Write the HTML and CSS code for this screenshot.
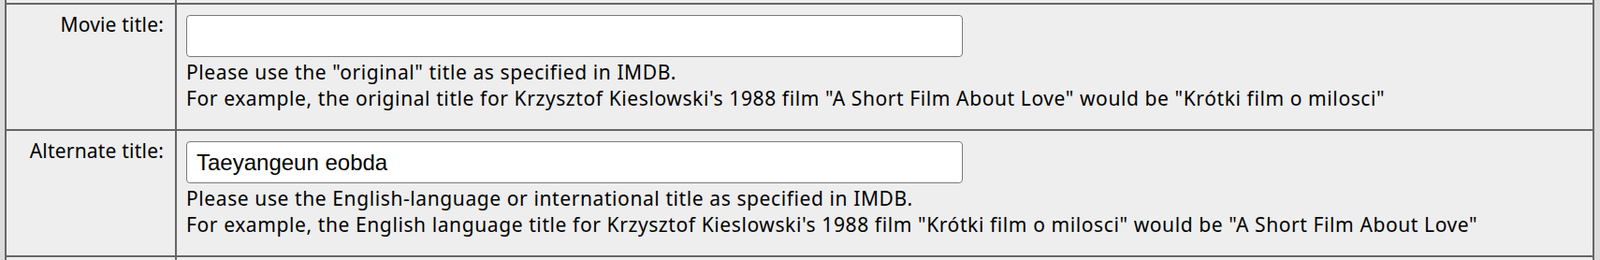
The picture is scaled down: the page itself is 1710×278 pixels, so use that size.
FILE: index.html
```html
<!DOCTYPE html>
<html lang="en">
<head>
<meta charset="utf-8">
<title>Movie titles</title>
<link rel="stylesheet" href="styles.css">
</head>
<body>
<div class="page">
  <table class="form">
    <tr class="stub"><td class="label"></td><td class="field"></td></tr>
    <tr>
      <td class="label">Movie title:</td>
      <td class="field">
        <input type="text" class="title-input" value="">
        <div class="help">Please use the "original" title as specified in IMDB.<br>For example, the original title for Krzysztof Kieslowski's 1988 film "A Short Film About Love" would be "Krótki film o milosci"</div>
      </td>
    </tr>
    <tr>
      <td class="label">Alternate title:</td>
      <td class="field">
        <input type="text" class="title-input" value="Taeyangeun eobda">
        <div class="help">Please use the English-language or international title as specified in IMDB.<br>For example, the English language title for Krzysztof Kieslowski's 1988 film "Krótki film o milosci" would be "A Short Film About Love"</div>
      </td>
    </tr>
    <tr class="stub"><td class="label"></td><td class="field"></td></tr>
  </table>
</div>
</body>
</html>
```

FILE: styles.css
```css
html, body {
  margin: 0;
  padding: 0;
  background: #dcdcdc;
}

.page {
  height: 278px;
  overflow: hidden;
  padding-left: 5px;
}

.form {
  border-collapse: separate;
  border-spacing: 0;
  border-left: 2px solid #666;
  width: 1699px;
  font-family: "Noto Sans", "DejaVu Sans", sans-serif;
  font-size: 21px;
  letter-spacing: 0.6px;
  line-height: 28px;
  color: #000;
}

.form td {
  background: #eeeeee;
  border-right: 2px solid #666;
  border-bottom: 2px solid #666;
  vertical-align: top;
}

.form .label {
  width: 168px;
  padding: 7px 12px 0 0;
  text-align: right;
  white-space: nowrap;
  letter-spacing: 0.2px;
}

.form .field {
  padding: 11px 0 19px 10px;
}

.form .stub td {
  height: 3px;
  padding: 0;
  font-size: 0;
  line-height: 0;
}

.form tr.stub:last-child td {
  height: 20px;
}

.title-input {
  display: block;
  box-sizing: border-box;
  width: 830px;
  height: 45px;
  margin: 0;
  padding: 0 8px 0 10px;
  border: 1px solid #7a7a7a;
  border-radius: 4px;
  background: #fff;
  font-family: "Liberation Sans", Arial, sans-serif;
  font-size: 24px;
  letter-spacing: 0;
  color: #000;
  outline: none;
}

.help {
  margin-top: 2px;
  white-space: nowrap;
}
```
